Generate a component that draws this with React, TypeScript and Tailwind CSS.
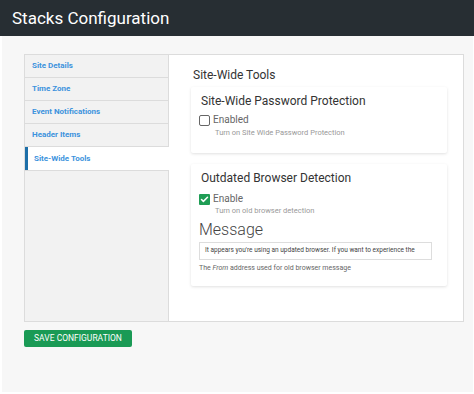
import { Check } from 'lucide-react'

const tabs = ['Site Details', 'Time Zone', 'Event Notifications', 'Header Items', 'Site-Wide Tools']

function Checkbox({ checked }: { checked: boolean }) {
  return checked ? (
    <div className="w-[11px] h-[11px] rounded-[1px] bg-[#1f9d55] flex items-center justify-center">
      <Check className="w-[9px] h-[9px] text-white" strokeWidth={4} />
    </div>
  ) : (
    <div className="w-[11px] h-[11px] rounded-[2px] border border-[#666]" />
  )
}

export default function App() {
  const active = 'Site-Wide Tools'

  return (
    <div className="w-[474px] h-[394px] bg-white font-['Roboto',sans-serif]">
      <div className="h-[36px] bg-[#272e33] flex items-center pl-[12px]">
        <h1 className="text-white text-[17px] leading-none">Stacks Configuration</h1>
      </div>
      <div className="ml-[2px] mr-[1px] h-[356px] bg-[#f7f7f7] pt-[18px] pl-[22px] pr-[9px]">
        <div className="flex h-[268px] border border-[#dcdcdc] bg-white">
          <div className="w-[144px] bg-[#f2f2f2] border-r border-[#dcdcdc] flex flex-col">
            {tabs.map(t =>
              t === active ? (
                <div
                  key={t}
                  className="h-[23px] bg-white border-l-[3px] border-[#1d6fa8] -mr-px pl-[6px] flex items-center text-[8px] font-bold text-[#3d93dd]"
                >
                  {t}
                </div>
              ) : (
                <div
                  key={t}
                  className="h-[23px] border-b border-[#dcdcdc] pl-[7px] flex items-center text-[8px] font-bold text-[#3d93dd]"
                >
                  {t}
                </div>
              )
            )}
            <div className="flex-1 border-t border-[#dcdcdc]" />
          </div>
          <div className="flex-1 pl-[22px] pr-[16px] pt-[12px]">
            <h2 className="pl-[2px] text-[12px] text-[#333] leading-[16px]">Site-Wide Tools</h2>
            <div className="mt-[4px] h-[66px] rounded-[2px] shadow-[0_1px_3px_rgba(0,0,0,0.12)] px-[8px] pt-[6px]">
              <h3 className="pl-[2px] text-[12px] text-[#333] leading-[16px]">Site-Wide Password Protection</h3>
              <div className="mt-[5px] flex items-center gap-[3px]">
                <Checkbox checked={false} />
                <span className="text-[10px] text-[#666] leading-[12px]">Enabled</span>
              </div>
              <div className="pl-[16px] mt-[2px] text-[7.5px] text-[#999] leading-[9px]">Turn on Site Wide Password Protection</div>
            </div>
            <div className="mt-[11px] h-[122px] rounded-[2px] shadow-[0_1px_3px_rgba(0,0,0,0.12)] px-[8px] pt-[6px]">
              <h3 className="pl-[2px] text-[12px] text-[#333] leading-[16px]">Outdated Browser Detection</h3>
              <div className="mt-[7px] flex items-center gap-[3px]">
                <Checkbox checked />
                <span className="text-[10px] text-[#666] leading-[12px]">Enable</span>
              </div>
              <div className="pl-[16px] mt-[1px] text-[7.5px] text-[#999] leading-[9px]">Turn on old browser detection</div>
              <div className="mt-[6px] text-[16px] font-light text-[#444] leading-[18px]">Message</div>
              <div className="mt-[3px] w-[233px] h-[18px] border border-[#ddd] flex items-center pl-[5px] text-[6.5px] text-[#444] whitespace-nowrap overflow-hidden">
                It appears you're using an updated browser. If you want to experience the
              </div>
              <div className="mt-[3px] text-[7px] text-[#666] leading-[10px]">
                The <em>From</em> address used for old browser message
              </div>
            </div>
          </div>
        </div>
        <button className="mt-[8px] w-[108px] h-[17px] rounded-[2px] bg-[#1a9a55] text-white text-[8.5px] leading-none">
          SAVE CONFIGURATION
        </button>
      </div>
    </div>
  )
}
